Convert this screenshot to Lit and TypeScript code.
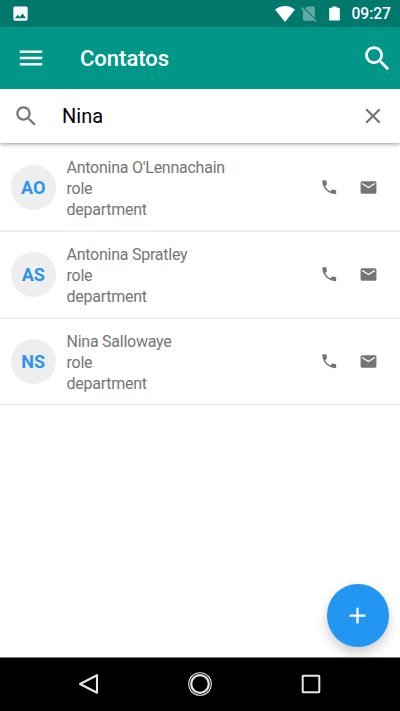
import { LitElement, html, css, svg } from "lit";
import { customElement, property } from "lit/decorators.js";

const icons = {
  image: svg`<path d="M21 19V5c0-1.100-.9-2-2-2H5c-1.100 0-2 .9-2 2v14c0 1.100.9 2 2 2h14c1.100 0 2-.9 2-2zM8.500 13.500l2.500 3.010L14.500 12l4.500 6H5l3.500-4.500z"/>`,
  menu: svg`<path d="M3 18h18v-2H3v2zm0-5h18v-2H3v2zm0-7v2h18V6H3z"/>`,
  search: svg`<path d="M15.500 14h-.79l-.28-.27C15.410 12.590 16 11.110 16 9.500 16 5.910 13.090 3 9.500 3S3 5.910 3 9.500 5.910 16 9.500 16c1.610 0 3.090-.59 4.230-1.570l.27.28v.79l5 4.990L20.490 19l-4.990-5zm-6 0C7.010 14 5 11.990 5 9.500S7.010 5 9.500 5 14 7.010 14 9.500 11.990 14 9.500 14z"/>`,
  close: svg`<path d="M19 6.410L17.590 5 12 10.590 6.410 5 5 6.410 10.590 12 5 17.590 6.410 19 12 13.410 17.590 19 19 17.590 13.410 12z"/>`,
  phone: svg`<path d="M6.620 10.790c1.440 2.830 3.760 5.140 6.590 6.590l2.200-2.200c.27-.27.67-.36 1.020-.24 1.120.37 2.330.57 3.570.57.55 0 1 .45 1 1V20c0 .55-.45 1-1 1-9.390 0-17-7.610-17-17 0-.55.45-1 1-1h3.500c.55 0 1 .45 1 1 0 1.250.2 2.450.57 3.570.11.35.03.74-.25 1.020l-2.200 2.200z"/>`,
  mail: svg`<path d="M20 4H4c-1.100 0-1.990.9-1.990 2L2 18c0 1.100.9 2 2 2h16c1.100 0 2-.9 2-2V6c0-1.100-.9-2-2-2zm0 4l-8 5-8-5V6l8 5 8-5v2z"/>`,
  add: svg`<path d="M19 13h-6v6h-2v-6H5v-2h6V5h2v6h6v2z"/>`,
  wifi: svg`<path d="M12 21.500L23.800 6.800C23.300 6.400 18.800 2.500 12 2.500S.7 6.400.2 6.800z"/>`,
  nosim: svg`<path d="M20 5c0-1.100-.9-2-2-2h-8L7.600 5.400 20 17.700zM3.600 3.900L2.300 5.200 5 7.800V19c0 1.100.9 2 2 2h11c.35 0 .68-.1.970-.26l1.830 1.860 1.300-1.300z"/>`,
  battery: svg`<path d="M18.500 4H15V2H9v2H5.500C4.700 4 4.500 4.500 4.500 5.300v15.400c0 .8.500 1.300 1.300 1.300h12.400c.8 0 1.300-.5 1.300-1.300V5.300c0-.8-.3-1.300-1-1.300z"/>`,
  back: svg`<path d="M20 3.200v17.600L3 12z" fill="none" stroke="currentColor" stroke-width="2.100" stroke-linejoin="round"/>`,
  home: svg`<circle cx="12" cy="12" r="11.300" fill="none" stroke="currentColor" stroke-width="1.100"/><circle cx="12" cy="12" r="8.800" fill="none" stroke="currentColor" stroke-width="2.300"/>`,
  recent: svg`<rect x="3.700" y="3.700" width="16.600" height="16.600" rx=".6" fill="none" stroke="currentColor" stroke-width="2"/>`,
};

@customElement("app-icon")
class AppIcon extends LitElement {
  @property() name: keyof typeof icons = "menu";

  static styles = css`
    :host { display: block; flex: none; width: 24px; height: 24px; }
    svg { display: block; width: 100%; height: 100%; fill: currentColor; overflow: visible; }
  `;

  render() {
    return html`<svg viewBox="0 0 24 24">${icons[this.name]}</svg>`;
  }
}

@customElement("contact-row")
class ContactRow extends LitElement {
  @property() name = "";
  @property() initials = "";

  static styles = css`
    :host {
      display: flex;
      align-items: center;
      box-sizing: border-box;
      height: 87px;
      padding: 0 22px 0 11px;
      border-bottom: 2px solid #f0f0f0;
      color: #757575;
    }
    :host(:last-of-type) {
      height: 86px;
      border-bottom: 1px solid #e6e6e6;
    }
    .avatar {
      width: 44.500px;
      height: 44.500px;
      flex: none;
      border-radius: 50%;
      background: #eee;
      color: #2b95ec;
      font-size: 18px;
      font-weight: 700;
      line-height: 46px;
      text-align: center;
    }
    .info { flex: 1; margin-left: 11px; padding-top: 1px; font-size: 16px; letter-spacing: -.25px; line-height: 21px; white-space: nowrap; }
    .phone { width: 18.500px; height: 18.500px; margin-right: 21px; }
    .mail { width: 19px; height: 19px; }
  `;

  render() {
    return html`
      <div class="avatar">${this.initials}</div>
      <div class="info">
        <div>${this.name}</div>
        <div>role</div>
        <div>department</div>
      </div>
      <app-icon class="phone" name="phone"></app-icon>
      <app-icon class="mail" name="mail"></app-icon>
    `;
  }
}

@customElement("app-root")
class AppRoot extends LitElement {
  private contacts = [
    { name: "Antonina O'Lennachain", initials: "AO" },
    { name: "Antonina Spratley", initials: "AS" },
    { name: "Nina Sallowaye", initials: "NS" },
  ];

  static styles = css`
    :host {
      display: flex;
      flex-direction: column;
      position: relative;
      height: 711px;
      overflow: hidden;
      background: #fff;
      font-family: Roboto, sans-serif;
    }
    .status {
      display: flex;
      align-items: center;
      box-sizing: border-box;
      height: 27px;
      padding: 0 9px 0 10.500px;
      background: #00786c;
      color: #fff;
    }
    .image { width: 19px; height: 19px; }
    .wifi { width: 20px; height: 20px; margin-left: auto; }
    .nosim { width: 19px; height: 19px; margin-left: 4.500px; opacity: .38; }
    .battery { width: 17px; height: 19px; margin-left: 8px; }
    .clock { margin-left: 8px; font-size: 15.600px; font-weight: 500; line-height: 27px; padding-top: 1px; }
    .bar {
      display: flex;
      align-items: center;
      box-sizing: border-box;
      height: 62px;
      padding: 0 6px 0 16px;
      background: #009788;
      color: #fff;
    }
    .menu { width: 30px; height: 30px; }
    .title { flex: 1; margin: 0 0 0 34px; padding-top: 2px; font-size: 22px; font-weight: 500; line-height: 60px; }
    .find { width: 33px; height: 33px; }
    .search {
      display: flex;
      align-items: center;
      box-sizing: border-box;
      height: 54px;
      padding: 0 14px 0 13px;
      background: #fff;
      box-shadow: 0 1px 4px rgba(0, 0, 0, .42);
      clip-path: inset(0 0 -8px 0);
      color: #757575;
    }
    .lens { width: 26.500px; height: 26.500px; }
    .query { flex: 1; margin-left: 22.500px; font-size: 20px; color: #000; }
    .close { width: 26px; height: 26px; }
    .list { flex: 1; padding-top: 2px; }
    .fab {
      position: absolute;
      right: 11px;
      bottom: 64.500px;
      display: flex;
      align-items: center;
      justify-content: center;
      width: 62.500px;
      height: 62.500px;
      border-radius: 50%;
      background: #2396f3;
      color: #fff;
      box-shadow: 0 6px 12px rgba(0, 0, 0, .2);
    }
    .plus { width: 27px; height: 27px; }
    .nav {
      position: relative;
      display: flex;
      align-items: center;
      justify-content: space-between;
      box-sizing: border-box;
      height: 54px;
      padding: 0 77.500px 1px 76.500px;
      border-top: 1px solid #777;
      background: #000;
      color: #e6e6e6;
    }
  `;

  render() {
    return html`
      <div class="status">
        <app-icon class="image" name="image"></app-icon>
        <app-icon class="wifi" name="wifi"></app-icon>
        <app-icon class="nosim" name="nosim"></app-icon>
        <app-icon class="battery" name="battery"></app-icon>
        <span class="clock">09:27</span>
      </div>
      <div class="bar">
        <app-icon class="menu" name="menu"></app-icon>
        <h1 class="title">Contatos</h1>
        <app-icon class="find" name="search"></app-icon>
      </div>
      <div class="search">
        <app-icon class="lens" name="search"></app-icon>
        <span class="query">Nina</span>
        <app-icon class="close" name="close"></app-icon>
      </div>
      <div class="list">
        ${this.contacts.map((c) => html`<contact-row .name=${c.name} .initials=${c.initials}></contact-row>`)}
      </div>
      <div class="fab"><app-icon class="plus" name="add"></app-icon></div>
      <div class="nav">
        <app-icon name="back"></app-icon>
        <app-icon name="home"></app-icon>
        <app-icon name="recent"></app-icon>
      </div>
    `;
  }
}
